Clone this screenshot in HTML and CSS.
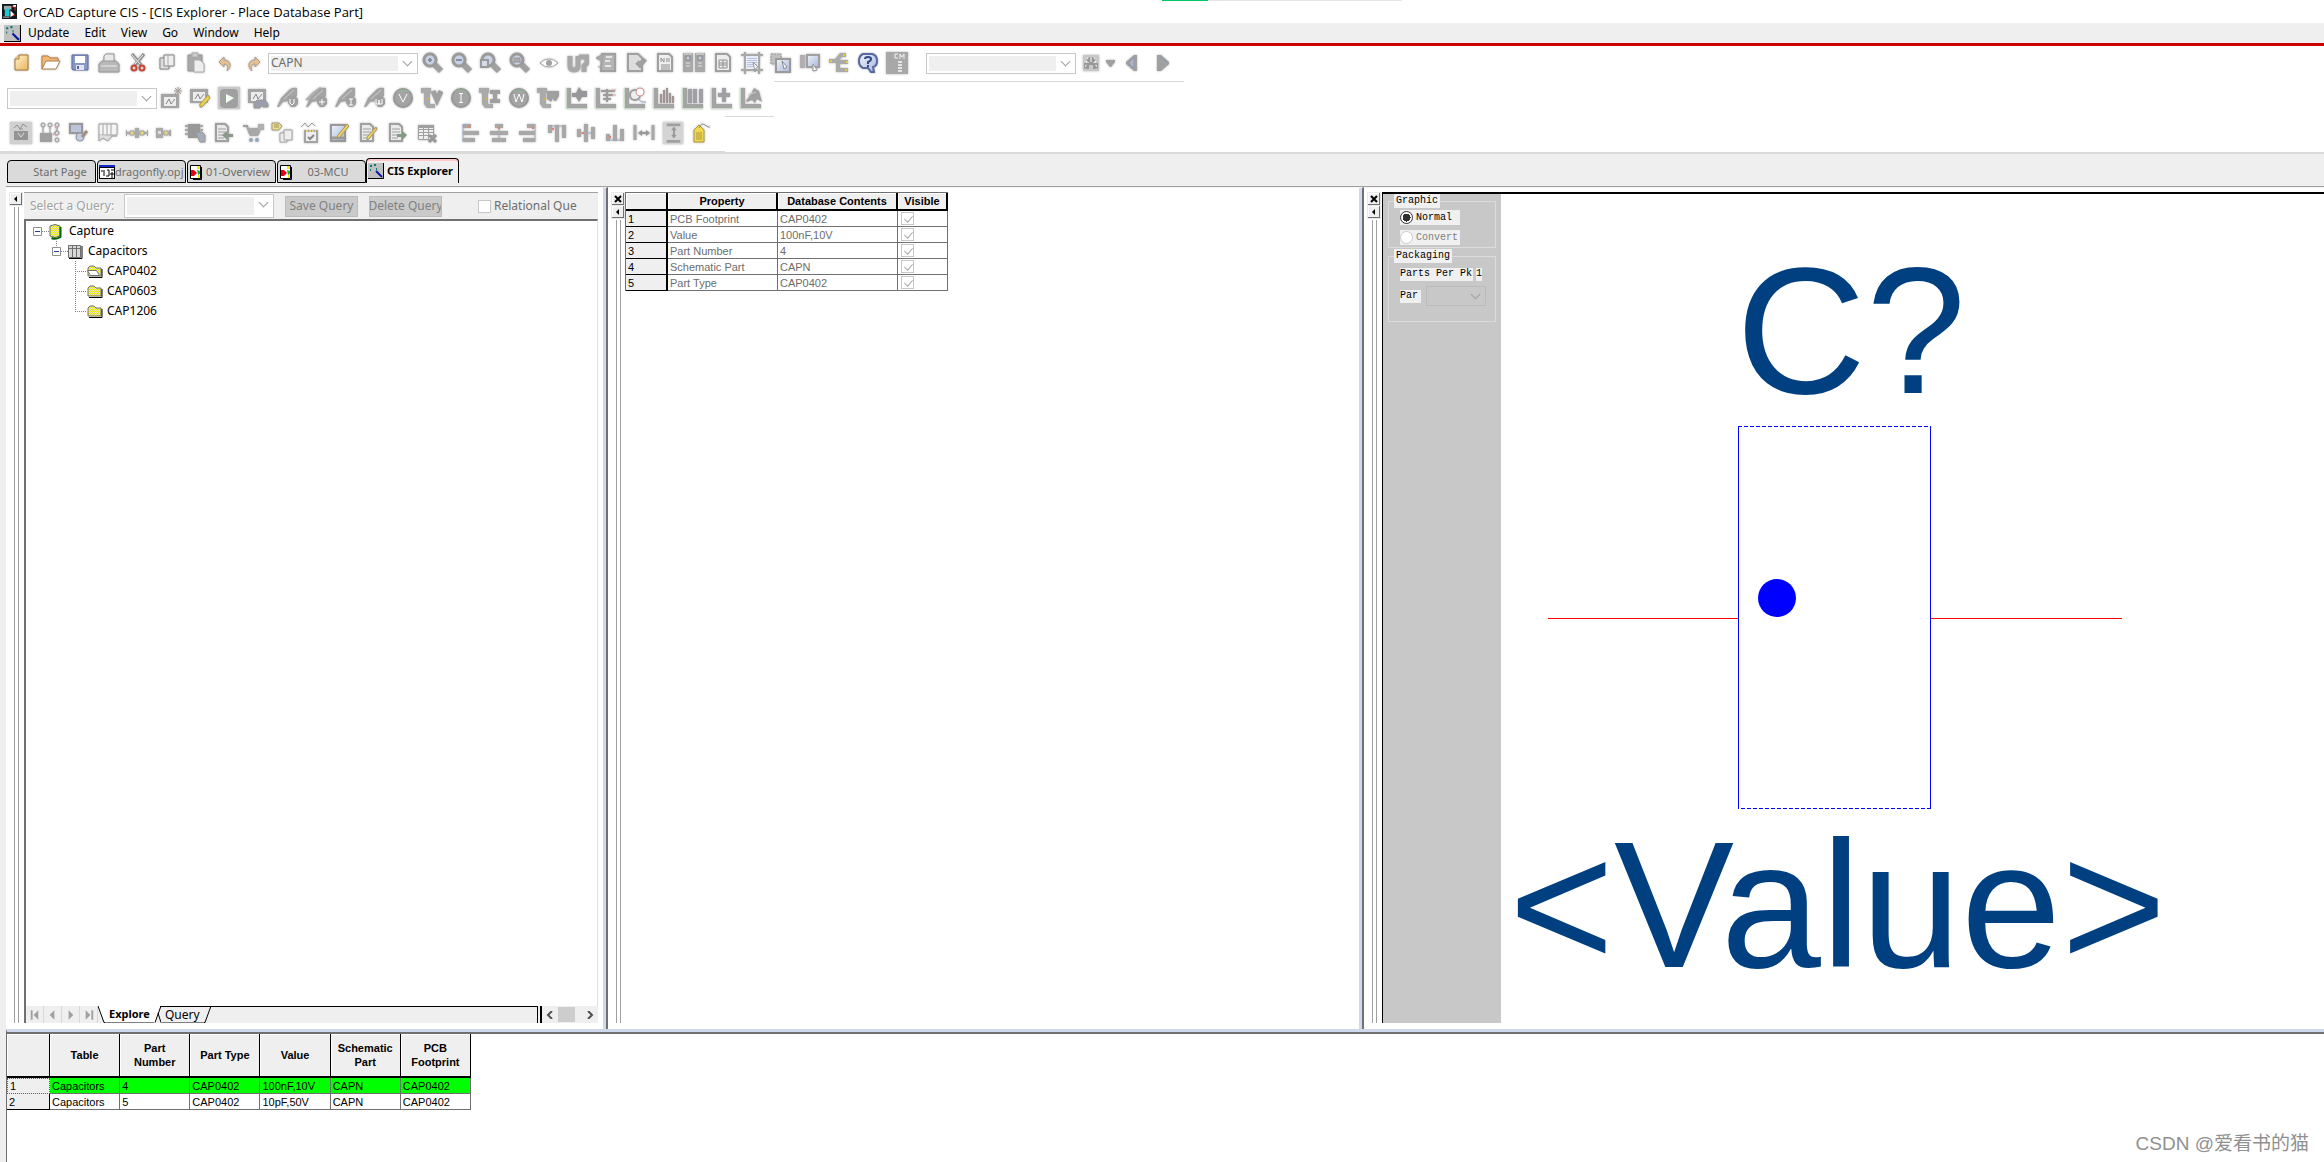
FILE: index.html
```html
<!DOCTYPE html>
<html lang="en">
<head>
<meta charset="utf-8">
<title>OrCAD Capture CIS - [CIS Explorer - Place Database Part]</title>
<link rel="stylesheet" href="styles.css">
</head>
<body>
<svg class="sprite" aria-hidden="true">
  <defs>
    <linearGradient id="gold" x1="0" y1="0" x2="1" y2="1"><stop offset="0" stop-color="#fff0c8"/><stop offset="1" stop-color="#e8b860"/></linearGradient>
    <linearGradient id="sky" x1="0" y1="0" x2="1" y2="1"><stop offset="0" stop-color="#eef2fa"/><stop offset="1" stop-color="#a8b8dc"/></linearGradient>
    <pattern id="weave" width="2" height="2" patternUnits="userSpaceOnUse"><rect width="2" height="2" fill="#ffff20"/><path d="M0 0h1v1H0zM1 1h1v1H1z" fill="#d0d0a0"/></pattern>
  </defs>
  <symbol id="new" viewBox="0 0 22 22"><path d="M8 3h9v15H4V7z" fill="url(#gold)" stroke="#a87838"/><path d="M4 7h4V3" fill="#f8dca0" stroke="#a87838"/></symbol>
  <symbol id="open" viewBox="0 0 22 22"><path d="M2 17V4h6l2 2h8v4" fill="#f0b878" stroke="#c07838"/><path d="M2 17L6 9h14l-4 8z" fill="#fff" stroke="#b08048"/></symbol>
  <symbol id="save" viewBox="0 0 22 22"><path d="M3 3h16v15H4l-1-1z" fill="#8898c8" stroke="#5868a0"/><path d="M6 4h10v7H6z" fill="#fff"/><path d="M7 13h8v5H7z" fill="#e0e4f0"/><path d="M8 14h2v3H8z" fill="#5868a0"/></symbol>
  <symbol id="print" viewBox="0 0 22 22"><path d="M6 10V4l2-2h8v8" fill="#e8e8e8" stroke="#999"/><path d="M1 12l3-3h14l3 3v8H1z" fill="#b8b8b8" stroke="#999"/><path d="M3 14h16" stroke="#eee"/></symbol>
  <symbol id="cut" viewBox="0 0 22 22"><path d="M5 2l9 11M17 2L8 13" stroke="#909090" stroke-width="3"/><path d="M5 3l8 9M16 3l-8 9" stroke="#eee"/><circle cx="7" cy="16" r="2.5" fill="none" stroke="#c84838" stroke-width="2"/><circle cx="15" cy="16" r="2.5" fill="none" stroke="#c84838" stroke-width="2"/></symbol>
  <symbol id="copy" viewBox="0 0 22 22"><path d="M4 6h9v11H4z" fill="#ddd" stroke="#888"/><path d="M8 3h10v11H8z" fill="#eee" stroke="#888"/><path d="M12 3v11" stroke="#aaa"/></symbol>
  <symbol id="paste" viewBox="0 0 22 22"><path d="M3 3h14v16H3z" fill="#a8a8a8" stroke="#989898"/><path d="M7 1h6v4H7z" fill="#ccc" stroke="#aaa"/><path d="M9 8h6l4 4v8H9z" fill="#eee" stroke="#aaa"/></symbol>
  <symbol id="undo" viewBox="0 0 22 22"><path d="M5 10l5-5v3c7 0 8 7 3 11 2-5 0-7-3-7v3z" fill="#e8c090" stroke="#b0a090"/></symbol>
  <symbol id="redo" viewBox="0 0 22 22"><path d="M17 10l-5-5v3c-7 0-8 7-3 11-2-5 0-7 3-7v3z" fill="#e8c090" stroke="#b0a090"/></symbol>
  <symbol id="lens" viewBox="0 0 22 22"><path d="M12 12l7 7" stroke="#a0a0a0" stroke-width="6"/><circle cx="8" cy="8" r="6" fill="#c8d2e6" stroke="#9a9a9a" stroke-width="3"/></symbol>
  <symbol id="zin" viewBox="0 0 22 22"><use href="#lens"/><path d="M8 6v4M6 8h4" stroke="#8890a0" stroke-width="2"/></symbol>
  <symbol id="zout" viewBox="0 0 22 22"><use href="#lens"/><path d="M5 8h6" stroke="#8890a0" stroke-width="2"/></symbol>
  <symbol id="zarea" viewBox="0 0 22 22"><use href="#lens"/><path d="M1 8h7v7H1z" fill="#d4dcec" stroke="#999" stroke-width="2"/></symbol>
  <symbol id="zall" viewBox="0 0 22 22"><use href="#lens"/><path d="M5 6h6v4H5zM4 10h3M10 10h3" stroke="#999" fill="#aaa"/></symbol>
  <symbol id="eye" viewBox="0 0 22 22"><path d="M2 11q9-8 18 0q-9 8-18 0z" fill="#fff" stroke="#a8a8a8"/><circle cx="11" cy="11" r="3" fill="#a0a0a0"/></symbol>
  <symbol id="ref" viewBox="0 0 22 22"><path d="M3 4v10q0 4 4 4q4 0 4-4V4M12 5h8v6l-3 3v6" fill="none" stroke="#a8a8a8" stroke-width="5"/></symbol>
  <symbol id="back" viewBox="0 0 22 22"><path d="M6 2h13v17H5z" fill="#b4b4b4" stroke="#a0a0a0" stroke-width="2"/><path d="M0 6l7-4v8zM2 14l4 3" stroke="#a0a0a0" fill="#aaa"/><path d="M10 5h6M9 9h5M9 14h6" stroke="#e4e4e4" stroke-width="2"/></symbol>
  <symbol id="check" viewBox="0 0 22 22"><path d="M3 2h10l4 4v13H3z" fill="#ddd" stroke="#a0a0a0" stroke-width="2"/><path d="M12 10l3 3 5-6" stroke="#a0a0a0" stroke-width="5" fill="none"/></symbol>
  <symbol id="note" viewBox="0 0 22 22"><path d="M4 2h11l3 3v14H4z" fill="#eee" stroke="#a0a0a0" stroke-width="2"/><path d="M7 10V6l3 4V6M12 7h4M12 9h4M7 13h9M7 15h9M7 17h9" stroke="#909090" fill="none"/></symbol>
  <symbol id="cross" viewBox="0 0 22 22"><path d="M0 1h10v19H0zM12 1h10v19H12z" fill="#a8a8a8"/><path d="M3 4h4v4H3zM15 4h4v4h-4z" fill="#c4cce0" stroke="#888"/><path d="M3 11h4M3 14h4M15 11h4M15 14h4M1 2h8M13 2h8" stroke="#e0e0e0"/></symbol>
  <symbol id="bom" viewBox="0 0 22 22"><path d="M4 2h11l3 3v14H4z" fill="#eee" stroke="#a0a0a0" stroke-width="2"/><path d="M7 8h8v8H7zM7 11h8M7 13h8M11 8v8" stroke="#909090" fill="none"/></symbol>
  <symbol id="grid" viewBox="0 0 22 22"><path d="M4 0v22M18 0v22M0 3h22M0 18h22" stroke="#a8a8a8" stroke-width="2"/><path d="M5 4h12v13H5z" fill="#e8ecf6"/><path d="M7 6v10M9 6v10M11 6v10M13 6v10M15 6v10" stroke="#8c9cc8" stroke-dasharray="1 1"/><path d="M12 10l5 5-2 1-1 4z" fill="#fff" stroke="#999"/></symbol>
  <symbol id="group" viewBox="0 0 22 22"><path d="M1 2h10v10H1z" fill="#c0c0c0" stroke="#999" stroke-dasharray="2 1"/><path d="M6 7h14v13H6z" fill="url(#sky)" stroke="#9a9a9a" stroke-width="2"/><path d="M12 9l5 6-3 2z" fill="#fff" stroke="#888"/></symbol>
  <symbol id="window" viewBox="0 0 22 22"><path d="M1 3h5v13H1z" fill="#b0b0b0"/><path d="M8 3h12v12H8z" fill="url(#sky)" stroke="#a0a0a0" stroke-width="2"/><path d="M14 12l4 6-4 1z" fill="#fff" stroke="#999"/></symbol>
  <symbol id="net" viewBox="0 0 22 22"><path d="M1 9h7M8 9l5-6h5M8 9l4 1h8M10 10v8h10" stroke="#aaa" stroke-width="4" fill="none"/><path d="M2 8h2v2H2zM15 2h2v2h-2zM18 9h2v2h-2zM17 17h2v2h-2z" fill="#e0d040"/></symbol>
  <symbol id="help" viewBox="0 0 22 22"><path d="M6 2h9q5 1 5 7q0 5-4 6l1 5h-3l-3-4H6q-4-2-4-7t4-7z" fill="url(#sky)" stroke="#5868a0" stroke-width="2"/><path d="M8 7q0-2 3-2t3 2-3 3v2M11 13v2" stroke="#304888" stroke-width="2" fill="none"/></symbol>
  <symbol id="cm" viewBox="0 0 22 22"><path d="M0 0h22v22H0z" fill="#a8a8a8"/><path d="M12 2H9v4h3M14 7V2l2 3 2-3v5" stroke="#f4f4f4" fill="none"/><path d="M12 10h4M12 13h4M12 16h4M12 19h4" stroke="#e4e4e4" stroke-width="2"/></symbol>
  <symbol id="find" viewBox="0 0 22 22"><path d="M3 3h16v16H3z" fill="#c8c8c8"/><path d="M7 5h3v5H7zM12 5h3v5h-3zM4 11h5v6H4zM13 11h5v6h-5zM9 10h4v3H9z" fill="#989898"/><path d="M8 5l-3 12M14 5l3 12" stroke="#fff" stroke-dasharray="2 2" fill="none"/></symbol>
  <symbol id="prev" viewBox="0 0 22 22"><path d="M12 3h3v16h-3L4 12v-2z" fill="#a0a0a0"/><path d="M12 5v12L7 11z" fill="#b0b4c4" stroke="#8c98b8"/></symbol>
  <symbol id="next" viewBox="0 0 22 22"><path d="M10 3H6v16h4l8-7v-2z" fill="#a0a0a0"/><path d="M9 4l7 7" stroke="#8c98b8"/></symbol>

  <symbol id="scr" viewBox="0 0 22 22"><path d="M1 5h18v14H1z" fill="#a4a4a4"/><path d="M4 8h12v9H4z" fill="#ededed"/><path d="M6 15l3-5 2 5 4-5" stroke="#888" fill="none"/></symbol>
  <symbol id="simnew" viewBox="0 0 22 22"><use href="#scr" y="2"/><path d="M18 0v8M14 4h8M15 1l6 6M21 1l-6 6" stroke="#a89c98"/></symbol>
  <symbol id="simedit" viewBox="0 0 22 22"><use href="#scr" y="-3"/><path d="M19 8l2 3-8 9h-2v-3z" fill="#ecd048" stroke="#a8985c"/></symbol>
  <symbol id="run" viewBox="0 0 22 22"><path d="M0 0h22v22H0z" fill="#c8c8c8"/><rect x="2" y="2" width="18" height="19" rx="4" fill="#a0a0a0"/><path d="M8 7l8 4-8 5z" fill="#f4fff4"/></symbol>
  <symbol id="simview" viewBox="0 0 22 22"><use href="#scr" y="-3"/><path d="M7 16l3-3h8l3 4v3h-5l-1-2-2 3H7z" fill="#9a9eac" stroke="#999"/></symbol>
  <symbol id="probe" viewBox="0 0 22 22"><path d="M1 20l4-9 9-9q4-2 7-1v8l-8 5-6 1-4 5z" fill="#a4a4a4"/><path d="M8 12l10-9" stroke="#ccc"/><path d="M12 9h7l3 3v5l-3 3h-4l-3-4z" fill="#a0a0a0"/></symbol>
  <symbol id="pv" viewBox="0 0 22 22"><use href="#probe"/><path d="M14 12v4l2 2 2-2v-4" stroke="#fff" fill="none"/></symbol>
  <symbol id="pp" viewBox="0 0 22 22"><path d="M0 13l8-8 7-5 4 2-8 12z" fill="#b0b0b0"/><use href="#probe"/><path d="M17 12v6M14 15h6" stroke="#fff"/></symbol>
  <symbol id="pi" viewBox="0 0 22 22"><use href="#probe"/><path d="M17 12v6M15 12h4M15 18h4" stroke="#fff"/></symbol>
  <symbol id="pw" viewBox="0 0 22 22"><use href="#probe"/><path d="M13 12v5h3v-4 4h3v-5" stroke="#fff" fill="none"/></symbol>
  <symbol id="disc" viewBox="0 0 22 22"><circle cx="11" cy="11" r="9" fill="#a4a4a4" stroke="#989898" stroke-width="2"/><path d="M5 5q6-4 12 0" stroke="#90b890" fill="none"/></symbol>
  <symbol id="dv" viewBox="0 0 22 22"><use href="#disc"/><path d="M7 7l4 8 4-8" stroke="#fff" fill="none"/></symbol>
  <symbol id="di" viewBox="0 0 22 22"><use href="#disc"/><path d="M9 6.500h4M11 6v9M9 15.500h4" stroke="#fff"/></symbol>
  <symbol id="dw" viewBox="0 0 22 22"><use href="#disc"/><path d="M6 7l2 8 3-8 3 8 2-8" stroke="#fff" fill="none"/></symbol>
  <symbol id="pin" viewBox="0 0 22 22"><path d="M0 1h10v5H9v11h5v4H6l-3-4V6H0z" fill="#aaa"/><path d="M6 11h2v2H6z" fill="#e0b040"/></symbol>
  <symbol id="tv" viewBox="0 0 22 22"><use href="#pin"/><path d="M12 4l4 9 4-9" stroke="#a0a0a0" stroke-width="5" fill="none"/></symbol>
  <symbol id="ti" viewBox="0 0 22 22"><use href="#pin"/><path d="M11 5h10M16 5v9M11 14h10" stroke="#a0a0a0" stroke-width="4"/></symbol>
  <symbol id="tw" viewBox="0 0 22 22"><use href="#pin"/><path d="M10 4h12v5l-3 5h-2l-1-3-2 4-4-3z" fill="#a0a0a0"/></symbol>
  <symbol id="axis" viewBox="0 0 22 22"><path d="M3 1v18h18" stroke="#a4a4a4" stroke-width="4" fill="none"/><path d="M.5 1v20.500H21" stroke="#c8dcc8" fill="none"/></symbol>
  <symbol id="a1" viewBox="0 0 22 22"><use href="#axis"/><path d="M13 0l3 4h5v6h-5l-3 5-3-5H6V6h4z" fill="#98989c"/></symbol>
  <symbol id="a2" viewBox="0 0 22 22"><use href="#axis"/><path d="M6 4h14M8 8h10M8 12h8M12 2v13" stroke="#a09c9c" stroke-width="2"/><path d="M17 3h4M17 8h4" stroke="#e0a8a8"/></symbol>
  <symbol id="a3" viewBox="0 0 22 22"><use href="#axis"/><circle cx="11" cy="8" r="5" fill="#eee" stroke="#a0a0a0" stroke-width="2"/><circle cx="16" cy="5" r="4" fill="#fff" stroke="#d89898"/><path d="M14 12l4 3h4" stroke="#98a4c0" fill="none"/></symbol>
  <symbol id="a4" viewBox="0 0 22 22"><use href="#axis"/><path d="M8 16V7M11 16V3M14 16V1M17 16V6M20 16V9" stroke="#a09494" stroke-width="2"/></symbol>
  <symbol id="a5" viewBox="0 0 22 22"><use href="#axis"/><path d="M8 16V2M13 16V2M19 16V2" stroke="#a0a0a4" stroke-width="4"/></symbol>
  <symbol id="a6" viewBox="0 0 22 22"><use href="#axis"/><path d="M13 1v14M7 8h12" stroke="#a0a0a4" stroke-width="4"/></symbol>
  <symbol id="a7" viewBox="0 0 22 22"><use href="#axis"/><path d="M6 14l5-7 3-6 5 3 3 11-5-3-2 4-3-3-5 2z" fill="#a0a0a0"/><path d="M8 8l8-3" stroke="#ccc"/></symbol>

  <symbol id="b1" viewBox="0 0 22 22"><path d="M0 0h22v22H0z" fill="#d0d0d0"/><path d="M4 9h14v9H4z" fill="#949494"/><path d="M4 6l3-3 3 4 3-5 4 3M9 7h4" stroke="#909090" fill="none"/><path d="M8 11l3 4 3-4" stroke="#ddd" fill="none"/></symbol>
  <symbol id="b2" viewBox="0 0 22 22"><path d="M1 11h12v9H1z" fill="#a0a0a0"/><g fill="#ddd" stroke="#989898"><circle cx="4" cy="3" r="2"/><circle cx="11" cy="3" r="2"/><circle cx="18" cy="3" r="2"/><circle cx="18" cy="11" r="2"/><circle cx="18" cy="18" r="2"/><path d="M4 5v6M11 5v6M18 5v3l-4 5"/></g><path d="M16 4h2v2h-2zM16 12h2v2h-2z" fill="#d8a8a8"/></symbol>
  <symbol id="b3" viewBox="0 0 22 22"><path d="M2 2h12v9H2z" fill="#bcc4dc" stroke="#989898" stroke-width="2"/><circle cx="12" cy="15" r="4" fill="#c0cce8" stroke="#9a9a9a"/><path d="M14 15l5-6" stroke="#a09080" stroke-width="3"/></symbol>
  <symbol id="b4" viewBox="0 0 22 22"><path d="M2 2h18v11H2zM6 2v11M10 2v11M14 2v11" fill="#f4f4f4" stroke="#a4a4a4"/><path d="M2 13v6l4-3 5 3 4-5h5" fill="#ddd" stroke="#a4a4a4"/></symbol>
  <symbol id="b5" viewBox="0 0 22 22"><path d="M0 8v6M0 11h22M22 8v6" stroke="#a8a8a8" stroke-width="2"/><path d="M4 9h4v4H4zM14 9h4v4h-4z" fill="#e8d870" stroke="#a8a8a8"/><path d="M9 6h4v10H9z" fill="#aaa"/></symbol>
  <symbol id="b6" viewBox="0 0 22 22"><path d="M1 6h7v10H1z" fill="#aaa"/><path d="M3 9h3v3H3z" fill="#ddd"/><path d="M8 11h7M15 8v6" stroke="#a8a8a8" stroke-width="2"/><path d="M9 9h4v4H9z" fill="#e8d870" stroke="#a8a8a8"/></symbol>
  <symbol id="b7" viewBox="0 0 22 22"><path d="M4 2h12v14H4z" fill="#989898"/><path d="M1 4h3M1 8h3M1 12h3M16 4h3M16 8h3" stroke="#a8a8a8" stroke-width="2"/><path d="M12 11l6-1 3 3v7h-5z" fill="#a4acbc" stroke="#999"/></symbol>
  <symbol id="doc" viewBox="0 0 22 22"><path d="M3 2h9l3 3v14H3z" fill="#eaeaea" stroke="#a0a0a0" stroke-width="2"/><path d="M5 7h8M5 10h8M5 13h8M5 16h6" stroke="#a0a0a0"/></symbol>
  <symbol id="b8" viewBox="0 0 22 22"><use href="#doc"/><path d="M9 13l5-4v3h6v3h-6v3z" fill="#8c988c"/></symbol>
  <symbol id="b9" viewBox="0 0 22 22"><path d="M1 4h4l3 8h8l3-8h3" fill="none" stroke="#a0a0a0" stroke-width="2"/><path d="M5 6h14l-3 8H8z" fill="#a8a8a8"/><path d="M16 2h6v6h-6z" fill="#b0b0b0"/><circle cx="9" cy="18" r="2" fill="#98a4bc"/><circle cx="15" cy="18" r="2" fill="#98a4bc"/></symbol>
  <symbol id="b10" viewBox="0 0 22 22"><path d="M1 1h7l3 3-3 4H1z" fill="#ecdc90" stroke="#a8a080"/><path d="M3 3h5M3 5h5" stroke="#a09860"/><path d="M9 11h7v9H9z" fill="#eee" stroke="#a4a4a4"/><path d="M13 8h8v10h-8z" fill="#eee" stroke="#a4a4a4"/></symbol>
  <symbol id="b11" viewBox="0 0 22 22"><path d="M1 5l4-4 3 4 4-4 3 3" fill="none" stroke="#a8a0a0"/><path d="M5 9h12v11H5z" fill="#eee" stroke="#a4a4a4" stroke-width="2"/><path d="M6 9h10" stroke="#e0d070" stroke-width="2" stroke-dasharray="2 1"/><path d="M8 15l2 2 4-4" stroke="#888" stroke-width="2" fill="none"/></symbol>
  <symbol id="b12" viewBox="0 0 22 22"><path d="M2 3h14v16H2z" fill="url(#sky)" stroke="#989898" stroke-width="2"/><path d="M3 16h12" stroke="#999" stroke-width="3"/><path d="M18 2l2 2-9 11-3 1 1-3z" fill="#ecd060" stroke="#a8985c"/></symbol>
  <symbol id="b13" viewBox="0 0 22 22"><use href="#doc"/><path d="M18 5l1 2-8 10-2 1v-3z" fill="#ecd060" stroke="#a8985c"/></symbol>
  <symbol id="b14" viewBox="0 0 22 22"><use href="#doc"/><path d="M20 13l-5-4v3h-5v3h5v3z" fill="#809c80"/></symbol>
  <symbol id="b15" viewBox="0 0 22 22"><path d="M2.500 3.500h15v14h-15zM2 7.500h15M2 10.500h15M2 13.500h15M7.500 3v14M12.500 3v14" fill="#eee" stroke="#a0a0a0"/><path d="M2 4.500h16" stroke="#a0a0a0" stroke-width="3"/><path d="M13 13l7 7M20 13l-7 7" stroke="#989898" stroke-width="3"/></symbol>
  <symbol id="c1" viewBox="0 0 22 22"><path d="M4 2v18" stroke="#98a8cc"/><path d="M4 4h8M4 11h16M4 18h12" stroke="#a8a8a8" stroke-width="4"/><path d="M9 4h2v2H9z" fill="#f08060"/></symbol>
  <symbol id="c2" viewBox="0 0 22 22"><path d="M11 2v18" stroke="#98a8cc"/><path d="M7 4h8M2 11h18M4 18h14" stroke="#a8a8a8" stroke-width="4"/><path d="M10 5h2v2h-2z" fill="#f08060"/></symbol>
  <symbol id="c3" viewBox="0 0 22 22"><path d="M18 2v18" stroke="#98a8cc"/><path d="M10 4h8M2 11h16M6 18h12" stroke="#a8a8a8" stroke-width="4"/><path d="M15 5h2v2h-2z" fill="#f08060"/></symbol>
  <symbol id="c4" viewBox="0 0 22 22"><path d="M2 4h18" stroke="#98a8cc"/><path d="M4 3v8M11 3v17M18 3v13" stroke="#a8a8a8" stroke-width="4"/><path d="M6 6h2v2H6z" fill="#f08060"/></symbol>
  <symbol id="c5" viewBox="0 0 22 22"><path d="M2 11h18" stroke="#98a8cc"/><path d="M4 7v8M11 2v18M18 5v12" stroke="#a8a8a8" stroke-width="4"/><path d="M7 10h2v2H7z" fill="#f08060"/></symbol>
  <symbol id="c6" viewBox="0 0 22 22"><path d="M2 18h18" stroke="#98a8cc"/><path d="M4 12v7M11 3v16M18 7v12" stroke="#a8a8a8" stroke-width="4"/><path d="M5 14h2v2H5z" fill="#f08060"/></symbol>
  <symbol id="c7" viewBox="0 0 22 22"><path d="M2 3v15M20 3v15" stroke="#a8a8a8" stroke-width="3"/><path d="M5 11l4-3v2h4V8l4 3-4 3v-2H9v2z" fill="#989898"/></symbol>
  <symbol id="c8" viewBox="0 0 22 24"><path d="M0 0h22v24H0z" fill="#d4d4d4"/><path d="M4 3h15M4 21h15" stroke="#a0a0a0" stroke-width="3"/><path d="M12 5l3 4h-2v5h2l-3 4-3-4h2V9H9z" fill="#989898"/></symbol>
  <symbol id="c9" viewBox="0 0 22 22"><path d="M3 8l5-5 5 5v12H3z" fill="#f0d850" stroke="#b09840"/><path d="M6 10v8M8 10v8M10 10v8" stroke="#b09840"/><path d="M8 6q2-6 6-3t5 2" stroke="#909090" fill="none"/></symbol>
  <symbol id="cis" viewBox="0 0 16 16"><path d="M0 0h16v16H0z" fill="#c0c0c0"/><path d="M0 15.500h15.500V0" stroke="#000" fill="none"/><path d="M2 3h2M6 2h2M2 7h1M8 6h1" stroke="#087878" stroke-width="2"/><path d="M8 8l6 6" stroke="#0818a0" stroke-width="2"/></symbol>
  <symbol id="sch" viewBox="0 0 14 16"><path d="M1.500 1.500h10v13h-10z" fill="#fff" stroke="#000"/><path d="M12.500 3v12.500H4" stroke="#000" fill="none"/><path d="M2 6h3l3 3-3 3H2z" fill="#e80010"/><path d="M8 2h3v3H8zM9 11h2v3H9z" fill="#ffe800"/><path d="M8 6l3 1v3l-2 1z" fill="#10b030"/></symbol>
  <symbol id="folder" viewBox="0 0 16 13"><path d="M1 11V3l2-2h4l2 2h5v8z" fill="url(#weave)" stroke="#707070"/><path d="M2 12.500h13V4" stroke="#000" fill="none"/></symbol>
</svg>

<header class="titlebar">
  <svg class="app-icon" viewBox="0 0 16 16"><path d="M0 0h16v16H0z" fill="#101820"/><path d="M2 2h8v4H2z" fill="#a0a8b0"/><path d="M3 5h5v8H3z" fill="#20c8d0"/><path d="M1 14h7" stroke="#c0c0c0"/><path d="M10 3h4v4M10 12h4" stroke="#f03020" fill="none"/><path d="M9 7l4 4-4 3zM12 1h3v2h-3z" fill="#fff"/></svg>
  <h1 class="title">OrCAD Capture CIS - [CIS Explorer - Place Database Part]</h1>
  <span class="progress"></span>
</header>
<nav class="menubar">
  <svg class="menu-icon"><use href="#cis"/></svg>
  <button>Update</button><button>Edit</button><button>View</button><button>Go</button><button>Window</button><button>Help</button>
</nav>

<section class="toolbars" aria-label="Toolbars">
  <div class="toolbar bar-main">
    <button aria-label="New"><svg><use href="#new"/></svg></button><button aria-label="Open"><svg><use href="#open"/></svg></button><button aria-label="Save"><svg><use href="#save"/></svg></button><button aria-label="Print"><svg><use href="#print"/></svg></button><button aria-label="Cut"><svg><use href="#cut"/></svg></button><button aria-label="Copy"><svg><use href="#copy"/></svg></button><button aria-label="Paste"><svg><use href="#paste"/></svg></button><button aria-label="Undo"><svg><use href="#undo"/></svg></button><button aria-label="Redo"><svg><use href="#redo"/></svg></button>
    <span class="combo combo-part"><select aria-label="Part" disabled><option>CAPN</option></select></span>
    <button aria-label="Zoom in"><svg><use href="#zin"/></svg></button><button aria-label="Zoom out"><svg><use href="#zout"/></svg></button><button aria-label="Zoom area"><svg><use href="#zarea"/></svg></button><button aria-label="Zoom all"><svg><use href="#zall"/></svg></button><button aria-label="Fisheye"><svg><use href="#eye"/></svg></button><button aria-label="Annotate"><svg><use href="#ref"/></svg></button><button aria-label="Back annotate"><svg><use href="#back"/></svg></button><button aria-label="Design rules check"><svg><use href="#check"/></svg></button><button aria-label="Create netlist"><svg><use href="#note"/></svg></button><button aria-label="Cross reference"><svg><use href="#cross"/></svg></button><button aria-label="Bill of materials"><svg><use href="#bom"/></svg></button><button aria-label="Snap to grid"><svg><use href="#grid"/></svg></button><button aria-label="Area select"><svg><use href="#group"/></svg></button><button aria-label="Drag connected"><svg><use href="#window"/></svg></button><button aria-label="Project manager"><svg><use href="#net"/></svg></button><button aria-label="Help topics"><svg><use href="#help"/></svg></button><button aria-label="Constraint manager"><svg><use href="#cm"/></svg></button>
    <span class="combo combo-find"><select aria-label="Find" disabled><option></option></select></span>
    <button aria-label="Find"><svg><use href="#find"/></svg></button>
    <button class="drop" aria-label="Find options"><svg viewBox="0 0 9 7"><path d="M0 0h9v2L5 7H4L0 2z" fill="#a0a0a0"/></svg></button>
    <button aria-label="Previous"><svg><use href="#prev"/></svg></button><button aria-label="Next"><svg><use href="#next"/></svg></button>
  </div>
  <div class="toolbar bar-sim">
    <span class="combo combo-sim"><select aria-label="Simulation profile" disabled><option></option></select></span>
    <button aria-label="New simulation"><svg><use href="#simnew"/></svg></button><button aria-label="Edit simulation"><svg><use href="#simedit"/></svg></button><button aria-label="Run"><svg><use href="#run"/></svg></button><button aria-label="View results"><svg><use href="#simview"/></svg></button><button aria-label="Voltage marker"><svg><use href="#pv"/></svg></button><button aria-label="Differential marker"><svg><use href="#pp"/></svg></button><button aria-label="Current marker"><svg><use href="#pi"/></svg></button><button aria-label="Power marker"><svg><use href="#pw"/></svg></button><button aria-label="Bias voltage"><svg><use href="#dv"/></svg></button><button aria-label="Toggle voltage"><svg><use href="#tv"/></svg></button><button aria-label="Bias current"><svg><use href="#di"/></svg></button><button aria-label="Toggle current"><svg><use href="#ti"/></svg></button><button aria-label="Bias power"><svg><use href="#dw"/></svg></button><button aria-label="Toggle power"><svg><use href="#tw"/></svg></button><button aria-label="Sensitivity"><svg><use href="#a1"/></svg></button><button aria-label="Optimizer"><svg><use href="#a2"/></svg></button><button aria-label="Smoke"><svg><use href="#a3"/></svg></button><button aria-label="Monte Carlo"><svg><use href="#a4"/></svg></button><button aria-label="Parametric"><svg><use href="#a5"/></svg></button><button aria-label="Add plot"><svg><use href="#a6"/></svg></button><button aria-label="Export plot"><svg><use href="#a7"/></svg></button>
  </div>
  <div class="toolbar bar-cis">
    <button aria-label="Part manager"><svg><use href="#b1"/></svg></button><button aria-label="Variants"><svg><use href="#b2"/></svg></button><button aria-label="View part"><svg><use href="#b3"/></svg></button><button aria-label="Measure"><svg><use href="#b4"/></svg></button><button aria-label="Link part"><svg><use href="#b5"/></svg></button><button aria-label="Unlink part"><svg><use href="#b6"/></svg></button><button aria-label="Place part"><svg><use href="#b7"/></svg></button><button aria-label="Import"><svg><use href="#b8"/></svg></button><button aria-label="Cart"><svg><use href="#b9"/></svg></button><button aria-label="Copy label"><svg><use href="#b10"/></svg></button><button aria-label="Verify"><svg><use href="#b11"/></svg></button><button aria-label="Edit part"><svg><use href="#b12"/></svg></button><button aria-label="Edit properties"><svg><use href="#b13"/></svg></button><button aria-label="Export"><svg><use href="#b14"/></svg></button><button class="last" aria-label="Clear table"><svg><use href="#b15"/></svg></button>
    <button aria-label="Align left"><svg><use href="#c1"/></svg></button><button aria-label="Align center"><svg><use href="#c2"/></svg></button><button aria-label="Align right"><svg><use href="#c3"/></svg></button><button aria-label="Align top"><svg><use href="#c4"/></svg></button><button aria-label="Align middle"><svg><use href="#c5"/></svg></button><button aria-label="Align bottom"><svg><use href="#c6"/></svg></button><button aria-label="Distribute horizontally"><svg><use href="#c7"/></svg></button><button aria-label="Distribute vertically"><svg><use href="#c8"/></svg></button><button aria-label="Tag"><svg><use href="#c9"/></svg></button>
  </div>
</section>

<nav class="doc-tabs">
  <button class="doc-tab"><i></i><span>Start Page</span></button>
  <button class="doc-tab"><svg class="opj" viewBox="0 0 16 14"><path d="M0 0h16v14H0z" fill="#000"/><path d="M1 3h14v10H1z" fill="#fff"/><path d="M0 0h16v2H0z" fill="#1028d0"/><path d="M2 6h2M5 5v6M8 5h2v6H7M12 5h3M13 7v6M11 9h4" stroke="#000" fill="none"/></svg><span>dragonfly.opj</span></button>
  <button class="doc-tab"><svg class="page"><use href="#sch"/></svg><span>01-Overview</span></button>
  <button class="doc-tab"><svg class="page"><use href="#sch"/></svg><span>03-MCU</span></button>
  <button class="doc-tab active"><svg class="page cis"><use href="#cis"/></svg><span>CIS Explorer</span></button>
</nav>

<main class="workspace">
  <section class="pane pane-tree">
    <div class="gripper"><button aria-label="Collapse explorer"><svg viewBox="0 0 8 8"><path d="M5 1v6L2 4z"/></svg></button><i class="grip"></i></div>
    <div class="explorer">
      <form class="query">
        <label class="query-label" for="q">Select a Query:</label>
        <span class="combo combo-query"><select id="q" disabled><option></option></select></span>
        <button type="button" class="qbtn save-q" disabled>Save Query</button>
        <button type="button" class="qbtn" disabled><span>Delete Query</span></button>
        <input type="checkbox" id="rel" disabled><label class="rel-label" for="rel">Relational Que</label>
      </form>
      <ul class="tree">
        <li><svg width="41" height="20" viewBox="0 0 41 20"><path d="M12 10.500h12" stroke="#808080" stroke-dasharray="1 1"/><path d="M7.500 6.500h8v8h-8z" fill="#fff" stroke="#909090"/><path d="M9 10.500h5" stroke="#2040a0"/><path d="M24 5q5-3 10 0v10q-5 3-10 0z" fill="url(#weave)" stroke="#607060"/><path d="M34.500 6v10q-5 3-9 1" stroke="#086008" stroke-width="2" fill="none"/></svg>Capture</li>
        <li><svg width="60" height="20" viewBox="0 0 60 20"><path d="M30.500 0v7M35 10.500h7" stroke="#808080" stroke-dasharray="1 1"/><path d="M26.500 6.500h8v8h-8z" fill="#fff" stroke="#909090"/><path d="M28 10.500h5" stroke="#2040a0"/><path d="M42.500 4.500h12v12h-12zM46.500 4v13M50.500 4v13M42 7.500h13" fill="#d8d8d8" stroke="#707070"/><path d="M43 17.500h13V5" stroke="#000" fill="none"/></svg>Capacitors</li>
        <li><svg width="79" height="20" viewBox="0 0 79 20"><path d="M49.500 0v20M51 10.500h10" stroke="#808080" stroke-dasharray="1 1"/><use href="#folder" x="61" y="4" width="16" height="13"/><path d="M61.500 9.500h9l3 5h-9z" fill="#fff" stroke="#707070"/></svg>CAP0402</li>
        <li><svg width="79" height="20" viewBox="0 0 79 20"><path d="M49.500 0v20M51 10.500h10" stroke="#808080" stroke-dasharray="1 1"/><use href="#folder" x="61" y="4" width="16" height="13"/></svg>CAP0603</li>
        <li><svg width="79" height="20" viewBox="0 0 79 20"><path d="M49.500 0v11M51 10.500h10" stroke="#808080" stroke-dasharray="1 1"/><use href="#folder" x="61" y="4" width="16" height="13"/></svg>CAP1206</li>
      </ul>
      <div class="sheet-bar">
        <button class="step" aria-label="First"><svg viewBox="0 0 18 16"><path d="M6 3v10" stroke="#a0a0a0" stroke-width="2"/><path d="M13 3v10L8 8z" fill="#a0a0a0"/></svg></button><button class="step" aria-label="Back"><svg viewBox="0 0 18 16"><path d="M11 3v10L6 8z" fill="#a0a0a0"/></svg></button><button class="step" aria-label="Forward"><svg viewBox="0 0 18 16"><path d="M7 3v10l5-5z" fill="#a0a0a0"/></svg></button><button class="step" aria-label="Last"><svg viewBox="0 0 18 16"><path d="M6 3v10l5-5z" fill="#a0a0a0"/><path d="M13 3v10" stroke="#a0a0a0" stroke-width="2"/></svg></button>
        <svg class="slant" viewBox="0 0 7 17"><path d="M0 0l7 17V0z" fill="#fff"/><path d="M0 0l6 16.500h1" stroke="#000" fill="none"/></svg><button class="sheet current">Explore</button><svg class="slant" viewBox="0 0 7 17"><path d="M0 0h6L1 17H0z" fill="#fff"/><path d="M7 0L1 16.500M4 7l3 9.500M6 .5h1" stroke="#000" fill="none"/></svg><button class="sheet">Query</button><svg class="slant" viewBox="0 0 7 17"><path d="M7 0L1 16.500H0M0 .5h7" stroke="#000" fill="none"/></svg>
        <i class="sheet-rest"></i><i class="sheet-end"></i>
        <div class="hscroll"><button aria-label="Scroll left"><svg viewBox="0 0 8 8"><path d="M6 0L2 4l4 4" stroke="#505050" stroke-width="2" fill="none"/></svg></button><i class="thumb"></i><button aria-label="Scroll right"><svg viewBox="0 0 8 8"><path d="M2 0l4 4-4 4" stroke="#505050" stroke-width="2" fill="none"/></svg></button></div>
      </div>
    </div>
  </section>

  <section class="pane pane-props">
    <div class="gripper"><button aria-label="Close properties"><svg viewBox="0 0 8 8"><path d="M1 1l6 6M7 1L1 7" stroke="#000" stroke-width="2"/></svg></button><button aria-label="Collapse properties"><svg viewBox="0 0 8 8"><path d="M5 1v6L2 4z"/></svg></button><i class="grip"></i></div>
    <table class="props">
      <colgroup><col class="w-no"><col class="w-prop"><col class="w-db"><col class="w-vis"></colgroup>
      <thead><tr><th></th><th>Property</th><th>Database Contents</th><th>Visible</th></tr></thead>
      <tbody>
        <tr><th>1</th><td>PCB Footprint</td><td>CAP0402</td><td><input type="checkbox" aria-label="PCB Footprint visible" checked disabled></td></tr>
        <tr><th>2</th><td>Value</td><td>100nF,10V</td><td><input type="checkbox" aria-label="Value visible" checked disabled></td></tr>
        <tr><th>3</th><td>Part Number</td><td>4</td><td><input type="checkbox" aria-label="Part Number visible" checked disabled></td></tr>
        <tr><th>4</th><td>Schematic Part</td><td>CAPN</td><td><input type="checkbox" aria-label="Schematic Part visible" checked disabled></td></tr>
        <tr><th>5</th><td>Part Type</td><td>CAP0402</td><td><input type="checkbox" aria-label="Part Type visible" checked disabled></td></tr>
      </tbody>
    </table>
  </section>

  <section class="pane pane-preview">
    <div class="gripper"><button aria-label="Close preview"><svg viewBox="0 0 8 8"><path d="M1 1l6 6M7 1L1 7" stroke="#000" stroke-width="2"/></svg></button><button aria-label="Collapse preview"><svg viewBox="0 0 8 8"><path d="M5 1v6L2 4z"/></svg></button><i class="grip"></i></div>
    <div class="preview">
      <div class="options">
        <fieldset class="graphic"><legend>Graphic</legend>
          <label class="radio"><input type="radio" name="g" checked>Normal</label>
          <label class="radio off"><input type="radio" name="g" disabled>Convert</label>
        </fieldset>
        <fieldset class="packaging"><legend>Packaging</legend>
          <p class="pkg-row"><span class="chip per">Parts Per Pk</span><span class="chip">1</span></p>
          <p class="pkg-row"><label class="chip part" for="part">Par</label><span class="combo combo-pkg"><select id="part" disabled><option></option></select></span></p>
        </fieldset>
      </div>
      <svg class="symbol" role="img" aria-label="Capacitor symbol">
        <text x="235" y="199">C?</text>
        <text x="8" y="773">&lt;Value&gt;</text>
        <path d="M237.500 232v383M429.500 232v383" stroke="#0000ff"/>
        <path d="M237 232.500h193M240 614.500h190" stroke="#0000ff" stroke-dasharray="4 2"/>
        <path d="M47 424.500h190M430 424.500h191" stroke="#ff0000"/>
        <circle cx="276" cy="404" r="19" fill="#0000ff"/>
      </svg>
    </div>
  </section>
</main>

<section class="results">
  <table class="parts">
    <colgroup><col class="w-no"><col><col><col><col><col><col></colgroup>
    <thead><tr><th></th><th>Table</th><th>Part Number</th><th>Part Type</th><th>Value</th><th>Schematic Part</th><th>PCB Footprint</th></tr></thead>
    <tbody>
      <tr class="selected"><th>1</th><td>Capacitors</td><td>4</td><td>CAP0402</td><td>100nF,10V</td><td>CAPN</td><td>CAP0402</td></tr>
      <tr><th>2</th><td>Capacitors</td><td>5</td><td>CAP0402</td><td>10pF,50V</td><td>CAPN</td><td>CAP0402</td></tr>
    </tbody>
  </table>
  <p class="credit">CSDN @爱看书的猫</p>
</section>
</body>
</html>
```
FILE: styles.css
```css
* { box-sizing: border-box; }

body {
  margin: 0;
  min-height: 100vh;
  display: flex;
  flex-direction: column;
  background: #efefef;
  color: #000;
  font: 12px/20px "Noto Sans", "Noto Sans CJK SC", sans-serif;
}

button {
  margin: 0;
  padding: 0;
  border: 0;
  background: none;
  font: inherit;
  color: inherit;
}

.sprite { position: absolute; width: 0; height: 0; }

/* title and menu */
.titlebar {
  position: relative;
  height: 23px;
  display: flex;
  align-items: center;
  gap: 6px;
  padding-left: 2px;
  background: #fff;
}
.app-icon { width: 15px; height: 15px; }
.title { margin: 0; font: 400 13px/20px "Open Sans", "Noto Sans", sans-serif; }
.progress {
  position: absolute;
  top: 0;
  left: 50%;
  width: 240px;
  height: 1px;
  background: linear-gradient(to right, #00c468 46px, #e4e4e4 46px);
}

.menubar {
  height: 23px;
  display: flex;
  align-items: center;
  gap: 15px;
  padding-left: 4px;
  background: #efefef;
  border-bottom: 3px solid #c80000;
}
.menu-icon { width: 17px; height: 17px; margin-right: -8px; }

/* toolbars */
.toolbars {
  background: #fff;
  border-bottom: 2px solid #dadada;
  height: 108px;
}
.toolbar {
  height: 36px;
  display: flex;
  align-items: center;
  gap: 7px;
  padding-bottom: 1px;
  background: #fff;
  border-bottom: 1px solid #dadada;
}
.toolbar + .toolbar { margin-top: -1px; position: relative; }
.toolbar button { flex: none; width: 22px; height: 22px; }
.toolbar svg {
  display: block;
  width: 100%;
  height: 100%;
  filter: drop-shadow(0 0 1px #b0b0b0);
}
.bar-main { width: 1184px; padding-left: 11px; }
.bar-sim { width: 774px; padding-left: 7px; }
.bar-sim button:first-of-type { margin-left: -4px; }
.bar-cis { width: 725px; padding-left: 10px; }
.bar-cis .last { margin-right: 14px; }
.toolbar .drop { width: 9px; height: 7px; margin-left: -3px; }

.combo {
  flex: none;
  width: 150px;
  height: 21px;
  position: relative;
  display: block;
  padding: 2px;
  background: #fff;
  border: 1px solid #c8c8c8;
}
.combo::after {
  content: "";
  position: absolute;
  right: 6px;
  top: 4px;
  width: 6px;
  height: 6px;
  border: solid #a0a0a0;
  border-width: 0 1px 1px 0;
  transform: rotate(45deg);
}
.combo select {
  appearance: none;
  display: block;
  width: calc(100% - 17px);
  height: 100%;
  padding: 0;
  border: 0;
  border-radius: 0;
  background: #efefef;
  color: #6d6d6d;
  font: 12px/14px "Noto Sans", sans-serif;
  opacity: 1;
}
.combo-part { margin: 0 -3px 0 -4px; }
.combo-find { margin: 0 -3px 0 11px; }

/* document tabs */
.doc-tabs {
  height: 32px;
  display: flex;
  align-items: flex-end;
  gap: 1px;
  padding: 0 0 3px 7px;
}
.doc-tab {
  width: 89px;
  height: 23px;
  display: flex;
  align-items: center;
  padding: 0 2px 0 1px;
  border: 1px solid #000;
  border-radius: 4px 4px 0 0;
  background: #dadada;
  color: #6d6d6d;
  font-size: 11px;
  white-space: nowrap;
}
.doc-tab span { flex: 1; text-align: center; }
.doc-tab i { width: 18px; }
.doc-tab .opj { flex: none; width: 16px; height: 14px; }
.doc-tab .page { flex: none; width: 14px; height: 16px; }
.doc-tab .cis { width: 16px; }
.doc-tab.active {
  width: 93px;
  height: 25px;
  margin-left: -1px;
  border-bottom: 0;
  background: #efefef;
  box-shadow: inset 0 2px #ffc8c8;
  color: #000;
  font-weight: 700;
}

/* workspace */
.workspace {
  flex: 1;
  display: grid;
  grid-template-columns: 602fr 756fr 960fr;
  margin-left: 6px;
  background: #fff;
  border-top: 1px solid #a0a0a0;
}
.pane {
  display: flex;
  min-width: 0;
  padding: 4px 0 6px 4px;
  border-top: 1px solid #f4f4f4;
}
.pane-tree, .pane-props {
  border-right: 2px solid #707070;
  box-shadow: inset -3px 0 #d0d8ec;
}
.pane-tree { padding-right: 8px; }

.gripper {
  flex: none;
  width: 13px;
  display: flex;
  flex-direction: column;
  gap: 1px;
  padding-top: 1px;
}
.gripper button {
  width: 12px;
  height: 12px;
  display: flex;
  align-items: center;
  justify-content: center;
  background: #efefef;
  border: solid #707070;
  border-width: 0 1px 1px 0;
  box-shadow: inset 1px 1px #fff, 0 0 0 1px #e8e8e8;
}
.gripper svg { width: 8px; height: 8px; }
.grip {
  flex: 1;
  width: 5px;
  margin: 1px 0 0 4px;
  border: solid #a0a0a0;
  border-width: 0 1px;
}

.explorer {
  flex: 1;
  min-width: 0;
  display: flex;
  flex-direction: column;
  margin-left: 1px;
  border-top: 1px solid #a0a0a0;
}
.query {
  height: 26px;
  display: flex;
  align-items: center;
  padding-left: 6px;
  background: #efefef;
  color: #6d6d6d;
  white-space: nowrap;
}
.query-label { width: 94px; color: #a0a0a0; text-shadow: 1px 1px #fff; }
.query .combo { height: 24px; }
.query .combo select { height: 18px; }
.qbtn {
  width: 73px;
  height: 21px;
  margin-left: 11px;
  display: flex;
  align-items: center;
  justify-content: center;
  overflow: hidden;
  background: #cacaca;
  border: 1px solid #bcbcbc;
  color: #808080;
}
.qbtn span { flex: none; }
.query input {
  appearance: none;
  flex: none;
  width: 13px;
  height: 13px;
  margin: 0 3px 0 36px;
  background: #fff;
  border: 1px solid #c8c8c8;
}
.rel-label { overflow: hidden; }

.tree {
  flex: 1;
  margin: 0;
  padding: 0;
  list-style: none;
  border: solid #707070;
  border-width: 2px 0 0 2px;
  border-right: 1px solid #e0e0e0;
}
.tree li { height: 20px; display: flex; gap: 2px; white-space: nowrap; }

.sheet-bar {
  height: 17px;
  display: flex;
  background: #efefef;
  border-left: 2px solid #707070;
  line-height: 16px;
}
.step { flex: none; width: 18px; height: 17px; border-right: 1px solid #d8d8d8; }
.step svg { display: block; width: 100%; height: 16px; }
.slant { flex: none; width: 7px; height: 17px; }
.sheet { flex: none; padding: 0 4px; border: solid #808080; border-width: 0 0 1px; }
.sheet:not(.current) { border-top: 1px solid #000; line-height: 15px; }
.sheet.current { background: #fff; font-weight: 700; font-size: 11px; }
.sheet-rest { flex: 1; border: solid #000; border-width: 1px 1px 0 0; }
.sheet-end { width: 4px; border-right: 2px solid #000; }
.hscroll { flex: none; width: 56px; display: flex; align-items: center; justify-content: space-between; padding: 0 4px; }
.hscroll button { width: 8px; height: 16px; display: flex; align-items: center; }
.hscroll svg { width: 8px; height: 8px; }
.thumb { width: 17px; height: 15px; margin-right: 8px; background: #cdcdcd; }

/* grids */
table {
  border-collapse: separate;
  border-spacing: 0;
  table-layout: fixed;
  font: 11px/14px "Liberation Sans", Arial, sans-serif;
}
th, td { padding: 0 2px; text-align: left; white-space: nowrap; overflow: hidden; }
td { border: solid #707070; border-width: 0 1px 1px 0; }
tbody tr { height: 16px; }
tbody th {
  background: #efefef;
  border: solid #000;
  border-width: 0 2px 1px 0;
  font-weight: 400;
}
thead th {
  text-align: center;
  background: #efefef;
  border: solid #000;
  border-width: 0 2px 2px 0;
  box-shadow: inset 1px 1px #fff;
}

.props {
  align-self: flex-start;
  width: 323px;
  border: solid #707070;
  border-width: 1px 0 0 1px;
  color: #6d6d6d;
}
.props th { color: #000; }
.props thead tr { height: 18px; }
.props input {
  appearance: none;
  display: block;
  width: 13px;
  height: 13px;
  margin: 0 0 0 1px;
  padding: 2px 0 0 4px;
  border: 1px solid #c8c8c8;
}
.props input::before {
  content: "";
  display: block;
  width: 4px;
  height: 7px;
  margin-top: -1px;
  border: solid #a8a8a8;
  border-width: 0 1px 1px 0;
  transform: rotate(40deg);
}
.w-no { width: 42px; }
.w-prop { width: 110px; }
.w-db { width: 120px; }
.w-vis { width: 50px; }

/* part preview */
.preview {
  flex: 1;
  min-width: 0;
  display: flex;
  border: solid #000;
  border-width: 2px 0 0 1px;
  margin-left: 1px;
}
.pane-preview { padding-left: 4px; }
.options {
  flex: none;
  width: 118px;
  padding: 0 5px;
  background: #c8c8c8;
  font: 10px/12px "Liberation Mono", "Courier New", monospace;
}
fieldset {
  min-width: 0;
  margin: 0 0 1px;
  padding: 0 0 0 11px;
  border: 1px solid #dcdcdc;
}
legend { margin-left: -6px; padding: 0 2px; line-height: 14px; background: #f0f0f0; }
.graphic { height: 54px; }
.packaging { height: 73px; margin-top: 1px; }
.radio {
  width: 60px;
  height: 15px;
  display: flex;
  align-items: center;
  gap: 3px;
  margin: 2px 0 5px;
  background: #f0f0f0;
}
.radio.off { color: #808080; }
.radio input {
  appearance: none;
  flex: none;
  width: 13px;
  height: 13px;
  margin: 0;
  border: 1px solid #303030;
  border-radius: 50%;
  background: radial-gradient(circle, #303030 4px, #fff 4px);
}
.radio.off input { border-color: #ccc; background: #fff; }
.pkg-row { display: flex; align-items: center; gap: 3px; margin: 0; height: 22px; }
.chip { height: 13px; background: #f0f0f0; white-space: nowrap; }
.per { width: 73px; }
.part { width: 21px; margin-right: 2px; }
.combo-pkg, .combo-pkg select { background: #c8c8c8; border-color: #bcbcbc; }
.combo-pkg { width: 60px; height: 20px; }
.symbol { flex: 1; min-width: 0; }
.symbol text { font: 180px "Liberation Sans", Arial, sans-serif; fill: #004080; }

/* database results */
.results {
  min-height: 133px;
  margin-left: 6px;
  display: flex;
  align-items: flex-start;
  justify-content: space-between;
  background: #fff;
  border-top: 3px solid #d0d8ec;
  border-left: 1px solid #707070;
  box-shadow: inset 0 2px #707070;
}
.parts { width: 464px; margin-top: 2px; }
.parts .w-no { width: 43px; }
.parts thead tr { height: 44px; }
.parts thead th { white-space: normal; }
.parts thead th, .parts tbody th { border-right-width: 1px; }
.parts .selected td { background: #00ff00; }
.parts .selected th { border: 1px dotted #e000e0; }
.credit {
  align-self: flex-end;
  margin: 0;
  padding: 0 15px 6px 0;
  font: 19px/24px "Liberation Sans", "Noto Sans CJK SC", sans-serif;
  color: #909090;
}
```
